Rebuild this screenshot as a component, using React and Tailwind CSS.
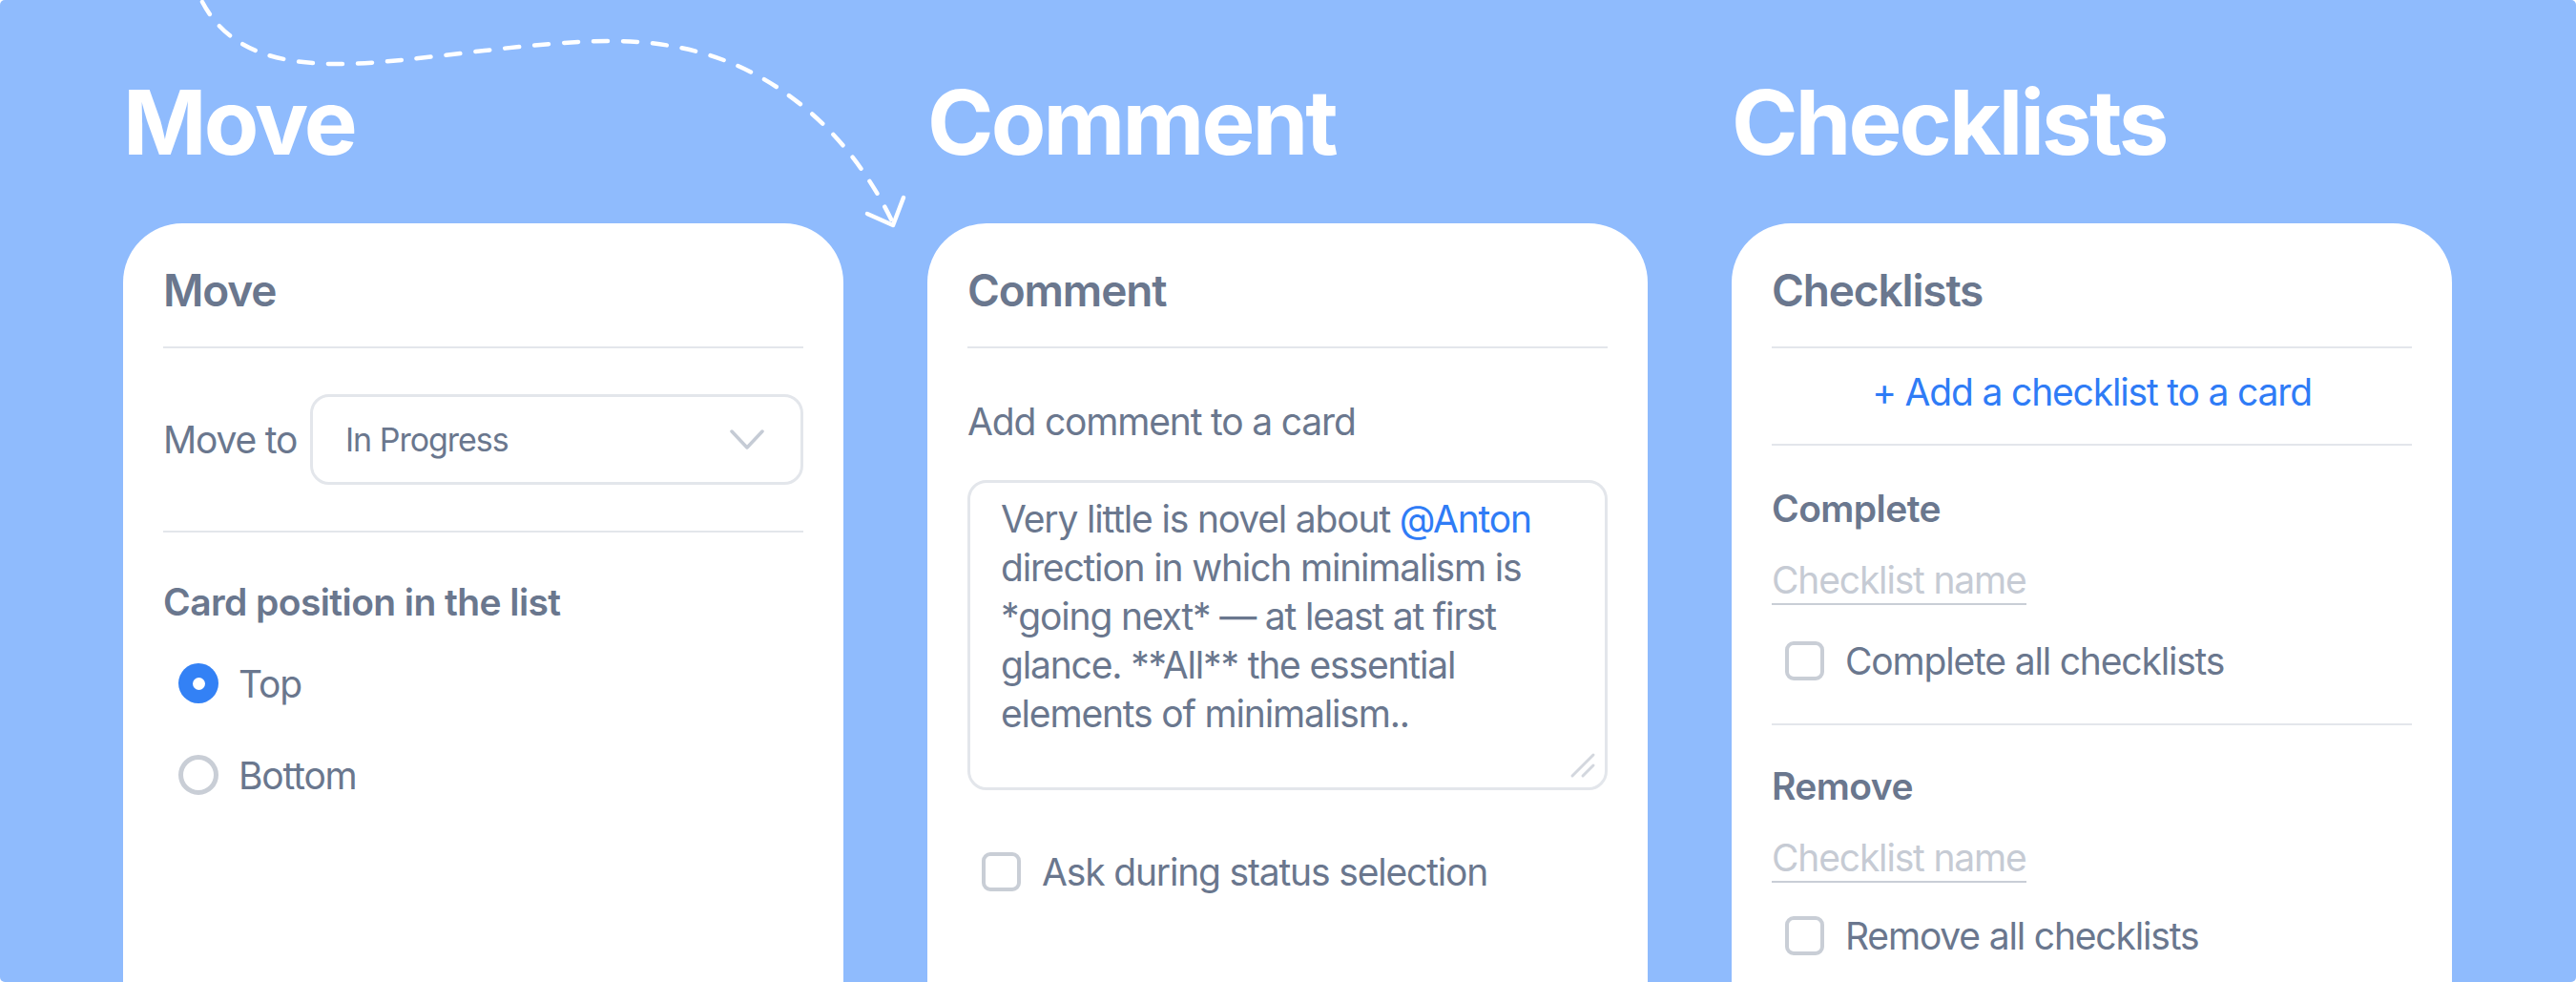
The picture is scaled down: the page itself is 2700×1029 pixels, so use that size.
import React from 'react';

const font = { fontFamily: 'Inter, "Noto Sans", sans-serif' };

const Divider = ({ className = '' }) => <div className={`h-[2px] bg-[#e3e6eb] ${className}`} />;

const Checkbox = ({ label, className = '' }) => (
    <div className={`flex items-center ${className}`}>
        <span className="w-[41px] h-[41px] rounded-[9px] border-[4px] border-[#c9ced6] shrink-0" />
        <span className="ml-[22px] text-[39px] leading-[39px] text-[#6a778e] tracking-[-0.03em] whitespace-nowrap">{label}</span>
    </div>
);

const Radio = ({ checked, label, className = '' }) => (
    <div className={`flex items-center h-[56px] pl-[16px] ${className}`}>
        {checked ? (
            <span className="w-[42px] h-[42px] rounded-full bg-[#3381f5] flex items-center justify-center shrink-0">
                <span className="w-[13px] h-[13px] rounded-full bg-white" />
            </span>
        ) : (
            <span className="w-[42px] h-[42px] rounded-full border-[5px] border-[#c9ced6] shrink-0" />
        )}
        <span className="ml-[21px] text-[39px] leading-[39px] text-[#6a778e] tracking-[-0.03em]">{label}</span>
    </div>
);

const Placeholder = ({ className = '' }) => (
    <div className={className}>
        <span className="inline-block pb-[5px] border-b-2 border-[#c9ced6] text-[39px] leading-[39px] text-[#c6cbd4] tracking-[-0.03em] whitespace-nowrap">
            Checklist name
        </span>
    </div>
);

const Column = ({ heading, title, children }) => (
    <div className="w-[755px] flex flex-col">
        <h1 className="h-[94px] text-[94px] leading-[94px] font-bold text-white tracking-[-0.03em] whitespace-nowrap">{heading}</h1>
        <div className="mt-[59px] flex-1 bg-white rounded-t-[62px] px-[42px] pt-[47px]">
            <h2 className="text-[46px] leading-[46px] font-semibold text-[#6a778e] tracking-[-0.025em]">{title}</h2>
            <Divider className="mt-[36px]" />
            {children}
        </div>
    </div>
);

const Arrow = () => (
    <svg className="absolute left-0 top-0 pointer-events-none" width="1000" height="260" viewBox="0 0 1000 260" fill="none">
        <path
            d="M212 2 C240 55 295 68 362 67 C430 66 560 42 645 43 C730 44 790 70 840 110 C890 150 920 200 936 234"
            stroke="white"
            strokeWidth="4.5"
            strokeLinecap="round"
            strokeDasharray="15 16"
        />
        <path d="M909 224 L936 236 L947 207" stroke="white" strokeWidth="4.5" strokeLinecap="round" strokeLinejoin="round" />
    </svg>
);

export default function App() {
    return (
        <div className="w-[2700px] h-[1029px] bg-white" style={font}>
            <div className="relative w-full h-full bg-[#8fbbfd] rounded-[5px] overflow-hidden flex gap-[88px] pl-[129px] pt-[81px]">
                <Arrow />

                {/* Move */}
                <Column heading="Move" title="Move">
                    <div className="flex items-center py-[48px]">
                        <span className="text-[39px] leading-[39px] text-[#6a778e] tracking-[-0.03em]">Move to</span>
                        <div className="ml-auto w-[517px] h-[95px] border-[3px] border-[#e3e6eb] rounded-[20px] flex items-center pl-[34px] pr-[38px]">
                            <span className="text-[34px] leading-[34px] text-[#6a778e] tracking-[-0.03em]">In Progress</span>
                            <svg className="ml-auto" width="36" height="22" viewBox="0 0 36 22" fill="none">
                                <path d="M2 2 L18 19 L34 2" stroke="#c5cbd5" strokeWidth="3.5" strokeLinecap="round" strokeLinejoin="round" />
                            </svg>
                        </div>
                    </div>
                    <Divider />
                    <h3 className="mt-[53px] text-[39px] leading-[39px] font-semibold text-[#6a778e] tracking-[-0.015em]">Card position in the list</h3>
                    <Radio checked label="Top" className="mt-[38px]" />
                    <Radio label="Bottom" className="mt-[40px]" />
                </Column>

                {/* Comment */}
                <Column heading="Comment" title="Comment">
                    <p className="mt-[57px] text-[39px] leading-[39px] text-[#6a778e] tracking-[-0.03em]">Add comment to a card</p>
                    <div className="relative mt-[42px] h-[325px] border-[3px] border-[#e3e6eb] rounded-[20px] pl-[32px] pt-[12px] text-[39px] leading-[51px] text-[#6a778e] tracking-[-0.03em]">
                        <div className="whitespace-nowrap">Very little is novel about <span className="text-[#2f7cf6]">@Anton</span></div>
                        <div className="whitespace-nowrap">direction in which minimalism is</div>
                        <div className="whitespace-nowrap">*going next* — at least at first</div>
                        <div className="whitespace-nowrap">glance. **All** the essential</div>
                        <div className="whitespace-nowrap">elements of minimalism..</div>
                        <svg className="absolute right-[9px] bottom-[9px]" width="28" height="28" viewBox="0 0 28 28" fill="none">
                            <path d="M3 25 L25 3 M14 25 L25 14" stroke="#d3d7de" strokeWidth="3" strokeLinecap="round" />
                        </svg>
                    </div>
                    <Checkbox label="Ask during status selection" className="mt-[65px] pl-[15px]" />
                </Column>

                {/* Checklists */}
                <Column heading="Checklists" title="Checklists">
                    <div className="h-[100px] flex items-center justify-center pb-[9px]">
                        <span className="text-[39px] leading-[39px] text-[#2f7cf6] tracking-[-0.03em]">+ Add a checklist to a card</span>
                    </div>
                    <Divider />
                    <h3 className="mt-[46px] text-[39px] leading-[39px] font-semibold text-[#6a778e] tracking-[-0.015em]">Complete</h3>
                    <Placeholder className="mt-[36px]" />
                    <Checkbox label="Complete all checklists" className="mt-[38px] pl-[14px]" />
                    <Divider className="mt-[45px]" />
                    <h3 className="mt-[44px] text-[39px] leading-[39px] font-semibold text-[#6a778e] tracking-[-0.015em]">Remove</h3>
                    <Placeholder className="mt-[36px]" />
                    <Checkbox label="Remove all checklists" className="mt-[35px] pl-[14px]" />
                </Column>
            </div>
        </div>
    );
}
